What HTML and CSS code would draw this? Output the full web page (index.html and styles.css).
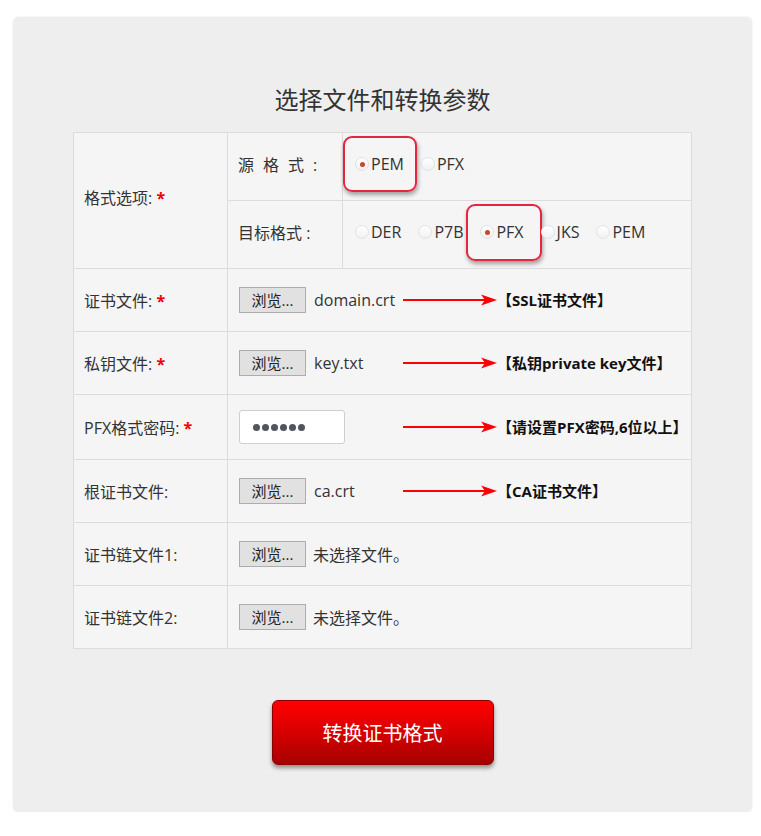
FILE: index.html
```html
<!DOCTYPE html>
<html lang="zh-CN">
<head>
<meta charset="utf-8">
<title>选择文件和转换参数</title>
<link rel="stylesheet" href="styles.css">
</head>
<body>
<div class="panel">
  <h2 class="title">选择文件和转换参数</h2>
  <table class="form">
    <tr class="r-tall">
      <td class="lbl lbl-top" rowspan="2">格式选项: <span class="req">*</span></td>
      <td class="sub"><span class="spread">源格式</span>:</td>
      <td class="opts">
        <div class="optrow">
          <span class="opt hl hl-a"><span class="radio on"></span>PEM</span>
          <span class="opt"><span class="radio"></span>PFX</span>
        </div>
      </td>
    </tr>
    <tr class="r-tall">
      <td class="sub">目标格式 :</td>
      <td class="opts">
        <div class="optrow">
          <span class="opt"><span class="radio"></span>DER</span>
          <span class="opt"><span class="radio"></span>P7B</span>
          <span class="opt hl hl-b"><span class="radio on"></span>PFX</span>
          <span class="opt"><span class="radio"></span>JKS</span>
          <span class="opt"><span class="radio"></span>PEM</span>
        </div>
      </td>
    </tr>
    <tr class="r">
      <td class="lbl">证书文件: <span class="req">*</span></td>
      <td class="val" colspan="2">
        <div class="line">
          <div class="file"><span class="browse">浏览...</span><span class="fname">domain.crt</span></div>
          <svg class="arrow" width="94" height="12" viewBox="0 0 94 12"><line x1="0" y1="6" x2="82" y2="6" stroke="#f00" stroke-width="2"/><polygon points="78,0.5 94,6 78,11.5 82,6" fill="#f00"/></svg>
          <span class="note">【SSL证书文件】</span>
        </div>
      </td>
    </tr>
    <tr class="r">
      <td class="lbl">私钥文件: <span class="req">*</span></td>
      <td class="val" colspan="2">
        <div class="line">
          <div class="file"><span class="browse">浏览...</span><span class="fname">key.txt</span></div>
          <svg class="arrow" width="94" height="12" viewBox="0 0 94 12"><line x1="0" y1="6" x2="82" y2="6" stroke="#f00" stroke-width="2"/><polygon points="78,0.5 94,6 78,11.5 82,6" fill="#f00"/></svg>
          <span class="note">【私钥private key文件】</span>
        </div>
      </td>
    </tr>
    <tr class="r-pw">
      <td class="lbl">PFX格式密码: <span class="req">*</span></td>
      <td class="val" colspan="2">
        <div class="line">
          <div class="file"><span class="pw"><i></i><i></i><i></i><i></i><i></i><i></i></span></div>
          <svg class="arrow" width="94" height="12" viewBox="0 0 94 12"><line x1="0" y1="6" x2="82" y2="6" stroke="#f00" stroke-width="2"/><polygon points="78,0.5 94,6 78,11.5 82,6" fill="#f00"/></svg>
          <span class="note">【请设置PFX密码,6位以上】</span>
        </div>
      </td>
    </tr>
    <tr class="r">
      <td class="lbl">根证书文件:</td>
      <td class="val" colspan="2">
        <div class="line">
          <div class="file"><span class="browse">浏览...</span><span class="fname">ca.crt</span></div>
          <svg class="arrow" width="94" height="12" viewBox="0 0 94 12"><line x1="0" y1="6" x2="82" y2="6" stroke="#f00" stroke-width="2"/><polygon points="78,0.5 94,6 78,11.5 82,6" fill="#f00"/></svg>
          <span class="note">【CA证书文件】</span>
        </div>
      </td>
    </tr>
    <tr class="r">
      <td class="lbl">证书链文件1:</td>
      <td class="val" colspan="2">
        <div class="line">
          <div class="file wide"><span class="browse">浏览...</span><span class="nofile">未选择文件。</span></div>
        </div>
      </td>
    </tr>
    <tr class="r">
      <td class="lbl">证书链文件2:</td>
      <td class="val" colspan="2">
        <div class="line">
          <div class="file wide"><span class="browse">浏览...</span><span class="nofile">未选择文件。</span></div>
        </div>
      </td>
    </tr>
  </table>
  <div class="actions">
    <button class="convert" type="button">转换证书格式</button>
  </div>
</div>
</body>
</html>
```
FILE: styles.css
```css
* { box-sizing: border-box; }
html, body { margin: 0; padding: 0; background: #fff; }
body {
  font-family: "Open Sans", "Noto Sans CJK SC", sans-serif;
  color: #333;
}
.panel {
  margin: 17px 9px 0 13px;
  height: 795px;
  background: #eeeeee;
  border-radius: 6px;
  box-shadow: 0 0 2px rgba(0,0,0,0.12);
  padding: 67px 60px 0;
}
.title {
  margin: 0 0 16px;
  height: 32px;
  line-height: 32px;
  font-size: 24px;
  font-weight: normal;
  text-align: center;
  color: #333;
}
.form {
  width: 619px;
  border-collapse: collapse;
  table-layout: fixed;
}
.form td {
  border: 1px solid #dcdcdc;
  background: #f5f5f5;
  padding: 0;
  vertical-align: middle;
}
.r-tall td { height: 68px; }
.r td { height: 63px; }
.r-pw td { height: 65px; }
.lbl {
  width: 154px;
  padding-left: 10px !important;
  font-size: 16px;
  color: #333;
}
.lbl-top { padding-bottom: 8px !important; }
.req { color: #e00; font-weight: bold; }
.sub {
  width: 115px;
  padding-left: 10px !important;
  padding-bottom: 5px !important;
  font-size: 16px;
  color: #333;
}
.spread { letter-spacing: 9px; }
.opts {
  padding-left: 12px !important;
  padding-bottom: 5px !important;
  font-size: 16px;
  color: #333;
}
.optrow { display: flex; align-items: center; }
.opt {
  display: flex;
  align-items: center;
  flex: none;
  margin-right: 17px;
  position: relative;
  line-height: 22px;
}
.radio {
  flex: none;
  width: 14px;
  height: 14px;
  border-radius: 50%;
  border: 1px solid #e2e2e2;
  background: linear-gradient(#ffffff, #f1f1f1);
  margin-right: 2px;
  display: flex;
  align-items: center;
  justify-content: center;
}
.radio.on::after {
  content: "";
  width: 5px;
  height: 5px;
  border-radius: 50%;
  background: #c8462a;
}
.hl::after {
  content: "";
  position: absolute;
  top: -17px;
  bottom: -17px;
  left: -12px;
  right: -13px;
  border: 2px solid #e4263e;
  border-radius: 9px;
  box-shadow: 1px 3px 4px rgba(0,0,0,0.35);
}
.hl-b::after { left: -14px; right: -18px; top: -17px; bottom: -18px; }
.val { padding-left: 11px !important; }
.line { display: flex; align-items: center; }
.file { width: 164px; flex: none; display: flex; align-items: center; white-space: nowrap; }
.file.wide { width: auto; }
.browse {
  flex: none;
  display: inline-block;
  width: 67px;
  height: 26px;
  line-height: 24px;
  border: 1px solid #adadad;
  background: #e1e1e1;
  font-size: 15px;
  text-align: center;
  color: #222;
}
.fname { margin-left: 8px; font-size: 16px; color: #333; }
.nofile { margin-left: 7px; font-size: 16px; color: #333; }
.pw {
  flex: none;
  width: 106px;
  height: 34px;
  background: #fff;
  border: 1px solid #cfcfcf;
  border-radius: 3px;
  display: flex;
  align-items: center;
  padding-left: 13px;
  gap: 2px;
}
.pw i {
  width: 7px;
  height: 7px;
  border-radius: 50%;
  background: #505560;
}
.arrow { display: block; flex: none; }
.note {
  font-size: 15px;
  font-weight: bold;
  color: #111;
  white-space: nowrap;
  position: relative;
  top: -1px;
}
.actions { display: flex; justify-content: center; margin-top: 51px; }
.convert {
  width: 222px;
  height: 65px;
  border: 1px solid #8d0000;
  border-radius: 6px;
  background: linear-gradient(#ff0000, #e00000 40%, #a60000);
  color: #fff;
  font-family: "Open Sans", "Noto Sans CJK SC", sans-serif;
  font-size: 20px;
  box-shadow: 0 3px 4px rgba(0,0,0,0.4);
  cursor: pointer;
}
```
